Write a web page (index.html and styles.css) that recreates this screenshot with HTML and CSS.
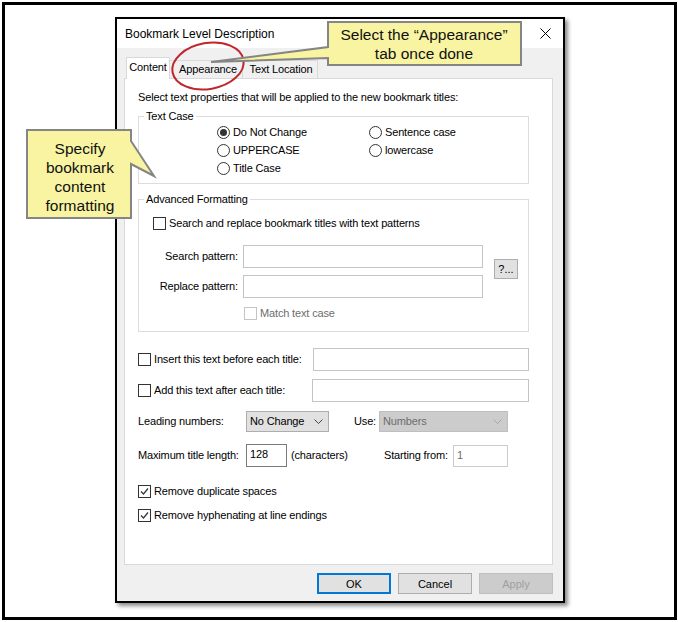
FILE: index.html
```html
<!DOCTYPE html>
<html lang="en">

<head>
    <meta charset="UTF-8">
    <meta name="viewport" content="width=device-width, initial-scale=1.0">
    <title>Bookmark Level Description</title>
    <link rel="stylesheet" href="styles.css">
</head>

<body>

    <div class="frame">
        <div class="dialog">

            <div class="titlebar">
                <span class="title">Bookmark Level Description</span>
                <svg class="close" width="11" height="11" viewBox="0 0 11 11">
                    <path d="M0.5 0.5 L10.5 10.5 M10.5 0.5 L0.5 10.5" stroke="#000" stroke-width="1" />
                </svg>
            </div>

            <div class="dlg-body">
                <div class="tabs">
                    <div class="tab active">Content</div>
                    <div class="tab appear">Appearance</div>
                    <div class="tab location">Text Location</div>
                </div>

                <div class="panel">
                    <p class="intro">Select text properties that will be applied to the new bookmark titles:</p>

                    <fieldset class="group case-group">
                        <legend>Text Case</legend>
                        <div class="case-grid">
                            <label class="opt"><span class="radio on"></span>Do Not Change</label>
                            <label class="opt"><span class="radio"></span>UPPERCASE</label>
                            <label class="opt"><span class="radio"></span>Title Case</label>
                            <label class="opt"><span class="radio"></span>Sentence case</label>
                            <label class="opt"><span class="radio"></span>lowercase</label>
                        </div>
                    </fieldset>

                    <fieldset class="group adv-group">
                        <legend>Advanced Formatting</legend>
                        <label class="opt search-opt"><span class="check"></span>Search and replace bookmark titles with text patterns</label>
                        <div class="pattern-grid">
                            <span class="plabel">Search pattern:</span>
                            <span class="field"></span>
                            <button class="btn help">?...</button>
                            <span class="plabel">Replace pattern:</span>
                            <span class="field"></span>
                        </div>
                        <label class="opt match-opt"><span class="check dim"></span>Match text case</label>
                    </fieldset>

                    <div class="line text-row">
                        <label class="opt"><span class="check"></span>Insert this text before each title:</label>
                        <span class="field before"></span>
                    </div>

                    <div class="line text-row add-row">
                        <label class="opt"><span class="check"></span>Add this text after each title:</label>
                        <span class="field after"></span>
                    </div>

                    <div class="line lead-row">
                        <span class="rlabel">Leading numbers:</span>
                        <div class="select">
                            <span>No Change</span>
                            <svg class="chev" width="9" height="5" viewBox="0 0 9 5"><polyline points="0.5,0.5 4.5,4.5 8.5,0.5" fill="none" stroke="#444" /></svg>
                        </div>
                        <span class="use">Use:</span>
                        <div class="select off">
                            <span>Numbers</span>
                            <svg class="chev" width="9" height="5" viewBox="0 0 9 5"><polyline points="0.5,0.5 4.5,4.5 8.5,0.5" fill="none" stroke="#a8a8a8" /></svg>
                        </div>
                    </div>

                    <div class="line max-row">
                        <span class="rlabel">Maximum title length:</span>
                        <span class="field num">128</span>
                        <span class="chars">(characters)</span>
                        <span class="from-label">Starting from:</span>
                        <span class="field num start">1</span>
                    </div>

                    <div class="line dup-row">
                        <label class="opt"><span class="check"><svg viewBox="0 0 11 11"><polyline points="2,5.5 4.5,8 9,2.5" fill="none" stroke="#333" stroke-width="1.2" /></svg></span>Remove duplicate spaces</label>
                    </div>

                    <div class="line hyph-row">
                        <label class="opt"><span class="check"><svg viewBox="0 0 11 11"><polyline points="2,5.5 4.5,8 9,2.5" fill="none" stroke="#333" stroke-width="1.2" /></svg></span>Remove hyphenating at line endings</label>
                    </div>
                </div>

                <div class="buttons">
                    <button class="btn default">OK</button>
                    <button class="btn">Cancel</button>
                    <button class="btn off">Apply</button>
                </div>
            </div>

        </div>

        <!-- callouts drawn over the screenshot -->
        <svg class="notes" width="678" height="622" viewBox="0 0 678 622">
            <ellipse cx="208" cy="66" rx="36" ry="23" transform="rotate(-10 208 66)" fill="none" stroke="#c0272d" stroke-width="2" />
            <path class="bubble" d="M328 22 H521 V65 H328 V58 L211 62 L328 47 Z" />
            <path class="bubble" d="M27 130 H131 V141 L154 176 L131 164 V218 H27 Z" />
            <text class="note-text" x="424" y="40">Select the “Appearance”</text>
            <text class="note-text" x="424" y="59">tab once done</text>
            <text class="note-text" x="80" y="154">Specify</text>
            <text class="note-text" x="80" y="173">bookmark</text>
            <text class="note-text" x="80" y="192">content</text>
            <text class="note-text" x="80" y="211">formatting</text>
        </svg>
    </div>

</body>

</html>
```

FILE: styles.css
```css
*,
*::after,
*::before {
    box-sizing: border-box;
}

body {
    margin: 0;
    background: #fff;
    font-family: "Liberation Sans", Arial, sans-serif;
    font-size: 11px;
    letter-spacing: -0.15px;
    color: #000;
}

.frame {
    position: relative;
    margin: 2px;
    width: 675px;
    height: 618px;
    border: 3px solid #000;
    padding: 12px 0 0 110px;
}

.dialog {
    width: 450px;
    height: 586px;
    border: 2px solid #000;
    background: #f0f0f0;
    box-shadow: 3px 3px 4px rgba(0, 0, 0, 0.45);
}

.titlebar {
    height: 29px;
    background: #fff;
    display: flex;
    align-items: center;
    justify-content: space-between;
    padding: 0 12px 0 8px;
}

.title {
    font-size: 12px;
    letter-spacing: 0;
}

.dlg-body {
    padding: 9px 10px 0 7px;
}

/* tabs */
.tabs {
    display: flex;
    align-items: flex-end;
    height: 21px;
    padding-left: 2px;
}

.tab {
    height: 18px;
    border: 1px solid #d9d9d9;
    border-bottom: none;
    background: #f0f0f0;
    display: flex;
    align-items: center;
    justify-content: center;
    line-height: 13px;
}

.tab.active {
    position: relative;
    z-index: 1;
    width: 44px;
    height: 22px;
    margin-bottom: -1px;
    background: #fff;
    align-items: flex-start;
    padding-top: 3px;
}

.tab.appear {
    width: 73px;
    border-left: none;
    padding-left: 4px;
}

.tab.location {
    width: 75px;
    border-left: none;
    padding-left: 2px;
}

.panel {
    height: 487px;
    border: 1px solid #d9d9d9;
    background: #fff;
    padding: 12px 0 0 13px;
    line-height: 13px;
}

.intro {
    margin: 0;
}

/* group boxes */
.group {
    margin: 6px 0 0;
    padding: 0;
    width: 391px;
    min-width: 0;
    border: 1px solid #dcdcdc;
}

.group legend {
    padding: 0 2px;
    margin-left: 5px;
    line-height: 13px;
}

.case-group {
    padding: 3px 0 3px;
}

.case-grid {
    display: grid;
    grid-template-columns: 152px auto;
    grid-template-rows: repeat(3, 18px);
    grid-auto-flow: column;
    padding-left: 78px;
}

.opt {
    display: flex;
    align-items: center;
    gap: 3px;
    height: 13px;
}

.radio {
    width: 13px;
    height: 13px;
    border: 1px solid #333;
    border-radius: 50%;
    display: flex;
    align-items: center;
    justify-content: center;
}

.radio.on::after {
    content: "";
    width: 7px;
    height: 7px;
    border-radius: 50%;
    background: #333;
}

.check {
    width: 13px;
    height: 13px;
    border: 1px solid #333;
    background: #fff;
    display: flex;
}

.check svg {
    width: 11px;
    height: 11px;
}

.check.dim {
    border-color: #c4c4c4;
}

.adv-group {
    margin-top: 9px;
    padding-bottom: 11px;
}

.search-opt {
    margin: 11px 0 0 14px;
}

.pattern-grid {
    display: grid;
    grid-template-columns: 99px 240px auto;
    grid-template-rows: 23px 23px;
    column-gap: 5px;
    row-gap: 7px;
    margin-top: 15px;
    align-items: center;
}

.plabel {
    text-align: right;
}

.field {
    display: block;
    height: 23px;
    border: 1px solid #c4c4c4;
    background: #fff;
}

.match-opt {
    margin: 9px 0 0 105px;
    color: #6d6d6d;
}

/* option rows */
.line {
    display: flex;
    align-items: center;
    width: 391px;
}

.text-row {
    justify-content: space-between;
    height: 23px;
    margin-top: 16px;
}

.field.before {
    width: 216px;
}

.field.after {
    width: 217px;
}

.add-row {
    margin-top: 8px;
}

.lead-row {
    margin-top: 9px;
}

.rlabel {
    width: 108px;
}

.select {
    width: 83px;
    height: 21px;
    border: 1px solid #adadad;
    background: #e1e1e1;
    display: flex;
    align-items: center;
    justify-content: space-between;
    padding: 0 5px 0 3px;
}

.select.off {
    width: 129px;
    background: #ccc;
    border-color: #bfbfbf;
    color: #6d6d6d;
}

.use {
    margin-left: 25px;
    width: 25px;
}

.max-row {
    margin-top: 12px;
}

.field.num {
    width: 41px;
    border-color: #7a7a7a;
    padding: 3px;
}

.chars {
    margin-left: 4px;
    width: 93px;
}

.from-label {
    width: 69px;
}

.field.num.start {
    width: 55px;
    height: 22px;
    border-color: #ccc;
    color: #6d6d6d;
}

.dup-row {
    margin-top: 18px;
}

.hyph-row {
    margin-top: 11px;
}

/* buttons */
.buttons {
    display: flex;
    justify-content: flex-end;
    gap: 7px;
    margin-top: 8px;
}

.btn {
    width: 74px;
    height: 21px;
    padding: 0;
    border: 1px solid #adadad;
    background: #e1e1e1;
    font: inherit;
    color: #000;
}

.btn.default {
    border: 2px solid #0078d7;
}

.btn.off {
    background: #ccc;
    border-color: #bfbfbf;
    color: #a0a0a0;
}

.btn.help {
    grid-column: 3;
    grid-row: 1 / 3;
    align-self: start;
    width: 24px;
    height: 20px;
    margin: 14px 0 0 6px;
}

/* callouts */
.notes {
    position: absolute;
    top: -5px;
    left: -5px;
    pointer-events: none;
}

.bubble {
    fill: #f8f4a2;
    stroke: #858585;
    stroke-width: 2;
}

.note-text {
    font-family: "Liberation Sans", Arial, sans-serif;
    font-size: 15.5px;
    letter-spacing: 0;
    text-anchor: middle;
    fill: #111;
}
```
